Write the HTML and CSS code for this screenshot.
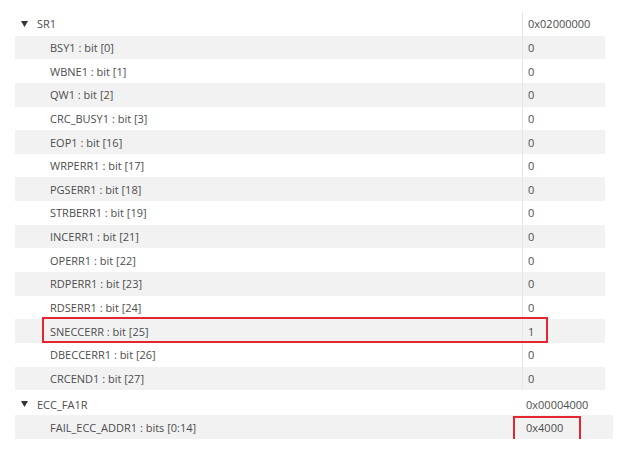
FILE: index.html
```html
<!DOCTYPE html>
<html lang="zh-CN">
<head>
  <meta charset="UTF-8">
  <title>寄存器状态</title>
  <link rel="stylesheet" href="styles.css">
</head>
<body>

<h1 class="fig-title"><span class="fig-no">图</span><span class="fig-name">寄存器状态</span></h1>

<div class="reg-view">
  <div class="reg-group">
    <div class="row head">
      <span class="name"><svg class="caret" width="7" height="6" viewBox="0 0 7 6"><path d="M0 0H7L3.5 6Z"/></svg>SR1</span>
      <span class="val">0x02000000</span>
    </div>
    <div class="row odd"><span class="name">BSY1 : bit [0]</span><span class="val">0</span></div>
    <div class="row"><span class="name">WBNE1 : bit [1]</span><span class="val">0</span></div>
    <div class="row odd"><span class="name">QW1 : bit [2]</span><span class="val">0</span></div>
    <div class="row"><span class="name">CRC_BUSY1 : bit [3]</span><span class="val">0</span></div>
    <div class="row odd"><span class="name">EOP1 : bit [16]</span><span class="val">0</span></div>
    <div class="row"><span class="name">WRPERR1 : bit [17]</span><span class="val">0</span></div>
    <div class="row odd"><span class="name">PGSERR1 : bit [18]</span><span class="val">0</span></div>
    <div class="row"><span class="name">STRBERR1 : bit [19]</span><span class="val">0</span></div>
    <div class="row odd"><span class="name">INCERR1 : bit [21]</span><span class="val">0</span></div>
    <div class="row"><span class="name">OPERR1 : bit [22]</span><span class="val">0</span></div>
    <div class="row odd"><span class="name">RDPERR1 : bit [23]</span><span class="val">0</span></div>
    <div class="row"><span class="name">RDSERR1 : bit [24]</span><span class="val">0</span></div>
    <div class="row odd marked"><span class="name">SNECCERR : bit [25]</span><span class="val">1</span><span class="mark mark-row"></span></div>
    <div class="row"><span class="name">DBECCERR1 : bit [26]</span><span class="val">0</span></div>
    <div class="row odd"><span class="name">CRCEND1 : bit [27]</span><span class="val">0</span></div>
  </div>

  <div class="reg-group plain">
    <div class="row head">
      <span class="name"><svg class="caret" width="7" height="6" viewBox="0 0 7 6"><path d="M0 0H7L3.5 6Z"/></svg>ECC_FA1R</span>
      <span class="val">0x00004000</span>
    </div>
    <div class="row odd wide marked"><span class="name">FAIL_ECC_ADDR1 : bits [0:14]</span><span class="val">0x4000</span><span class="mark mark-val"></span></div>
  </div>
</div>

</body>
</html>
```

FILE: styles.css
```css
body {
  margin: 0;
  background: #fff;
  font-family: "Open Sans", "Noto Sans", sans-serif;
  font-size: 11px;
  color: #4d4d4d;
}
.fig-title {
  margin: -22px 0 0;
  padding-left: 307px;
  height: 24px;
  font-family: "Noto Sans CJK SC", sans-serif;
  font-size: 20px;
  line-height: 24px;
  font-weight: bold;
  color: #000;
  white-space: nowrap;
}
.fig-name {
  margin-left: 86px;
}
.reg-view {
  margin: 10px 0 0 15px;
  width: 590px;
}
.row {
  position: relative;
  display: grid;
  grid-template-columns: 507px 83px;
  height: 23.65px;
  align-items: center;
}
.row.odd {
  background: #f2f2f2;
}
.row .name {
  display: flex;
  align-items: center;
  padding-left: 35px;
  white-space: nowrap;
}
.row.head .name {
  padding-left: 6px;
}
.caret {
  fill: #333;
  margin-right: 9px;
}
.row .val {
  align-self: stretch;
  display: flex;
  align-items: center;
  padding-left: 5px;
  border-left: 1px solid #e6e6e6;
}
.reg-group.plain {
  margin-top: 3px;
}
.reg-group.plain .val {
  border-left: none;
  padding-left: 4px;
}
.reg-group.plain .row.head {
  height: 22px;
}
.row.wide {
  width: 598px;
  height: 24px;
}
.mark {
  position: absolute;
  border: 2px solid #e32630;
  pointer-events: none;
}
.mark-row {
  left: 27px;
  right: 57px;
  top: -2px;
  bottom: 0;
}
.mark-val {
  left: 498px;
  width: 64px;
  top: 1px;
  height: 21px;
}
```
